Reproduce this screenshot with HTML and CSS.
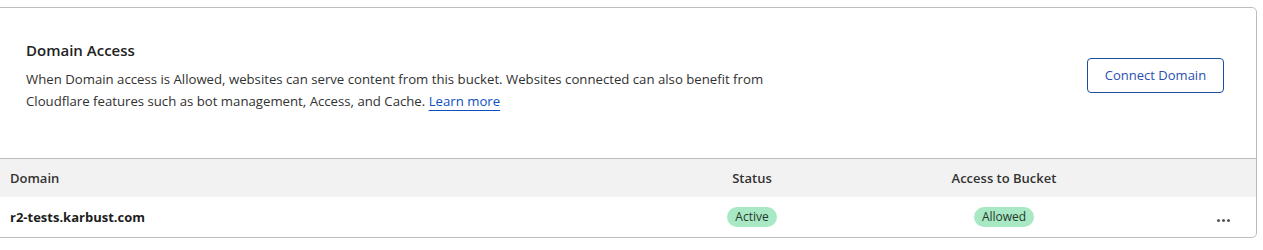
FILE: index.html
```html
<!DOCTYPE html>
<html lang="en">
<head>
<meta charset="utf-8">
<title>Domain Access</title>
<link rel="stylesheet" href="styles.css">
</head>
<body>
<div class="card">
  <div class="intro">
    <div class="intro-text">
      <h2 class="title">Domain Access</h2>
      <p class="desc">When Domain access is Allowed, websites can serve content from this bucket. Websites connected can also benefit from Cloudflare features such as bot management, Access, and Cache. <a class="link" href="#">Learn more</a></p>
    </div>
    <button class="btn">Connect Domain</button>
  </div>
  <div class="table">
    <div class="row head">
      <div class="cell c-domain">Domain</div>
      <div class="cell c-center">Status</div>
      <div class="cell c-center">Access to Bucket</div>
      <div class="cell"></div>
    </div>
    <div class="row body">
      <div class="cell c-domain strong">r2-tests.karbust.com</div>
      <div class="cell c-center"><span class="badge">Active</span></div>
      <div class="cell c-center"><span class="badge">Allowed</span></div>
      <div class="cell c-center"><span class="dots"><i></i><i></i><i></i></span></div>
    </div>
  </div>
</div>
</body>
</html>
```

FILE: styles.css
```css
* { box-sizing: border-box; }
body {
  margin: 0;
  background: #fff;
  font-family: "Open Sans", "Noto Sans", sans-serif;
  color: #36393a;
}
.card {
  margin: 7px 6px 0 -2px;
  border: 1px solid #bcbcbc;
  border-radius: 0 5px 5px 0;
  background: #fff;
  overflow: hidden;
}
.intro {
  display: flex;
  align-items: center;
  justify-content: space-between;
  padding: 31px 32px 46px 27px;
}
.intro-text { max-width: 780px; }
.title {
  margin: 0 0 7px;
  font-size: 15px;
  font-weight: 600;
  color: #222;
  line-height: 22px;
}
.desc {
  margin: 0;
  font-size: 13.2px;
  line-height: 22px;
  color: #313131;
}
.link {
  color: #0b4fc0;
  text-decoration: underline;
  text-underline-offset: 4px;
  text-decoration-thickness: 1px;
}
.btn {
  margin-top: -1px;
  width: 137px;
  height: 35px;
  background: #fff;
  border: 1px solid #1b4ea0;
  border-radius: 4px;
  color: #2a4fb0;
  font-family: inherit;
  font-size: 13px;
}
.table { border-top: 1px solid #bcbcbc; }
.row {
  display: grid;
  grid-template-columns: 690px 126px 378px 1fr;
  align-items: center;
}
.head {
  height: 38px;
  background: #f2f2f2;
  font-size: 13px;
  font-weight: 600;
  color: #333;
}
.body {
  height: 40px;
  font-size: 13px;
}
.c-domain { padding-left: 11px; }
.c-center { text-align: center; }
.strong { font-weight: 700; color: #1d1d1d; }
.badge {
  display: inline-block;
  height: 20px;
  line-height: 20px;
  padding: 0 8px;
  border-radius: 10px;
  background: #a9e8c4;
  color: #1f3a2a;
  font-size: 12px;
}
.dots {
  display: inline-flex;
  gap: 2px;
  margin-left: -2px;
}
.dots i {
  display: block;
  width: 3px;
  height: 3px;
  border-radius: 50%;
  background: #555;
}
```
